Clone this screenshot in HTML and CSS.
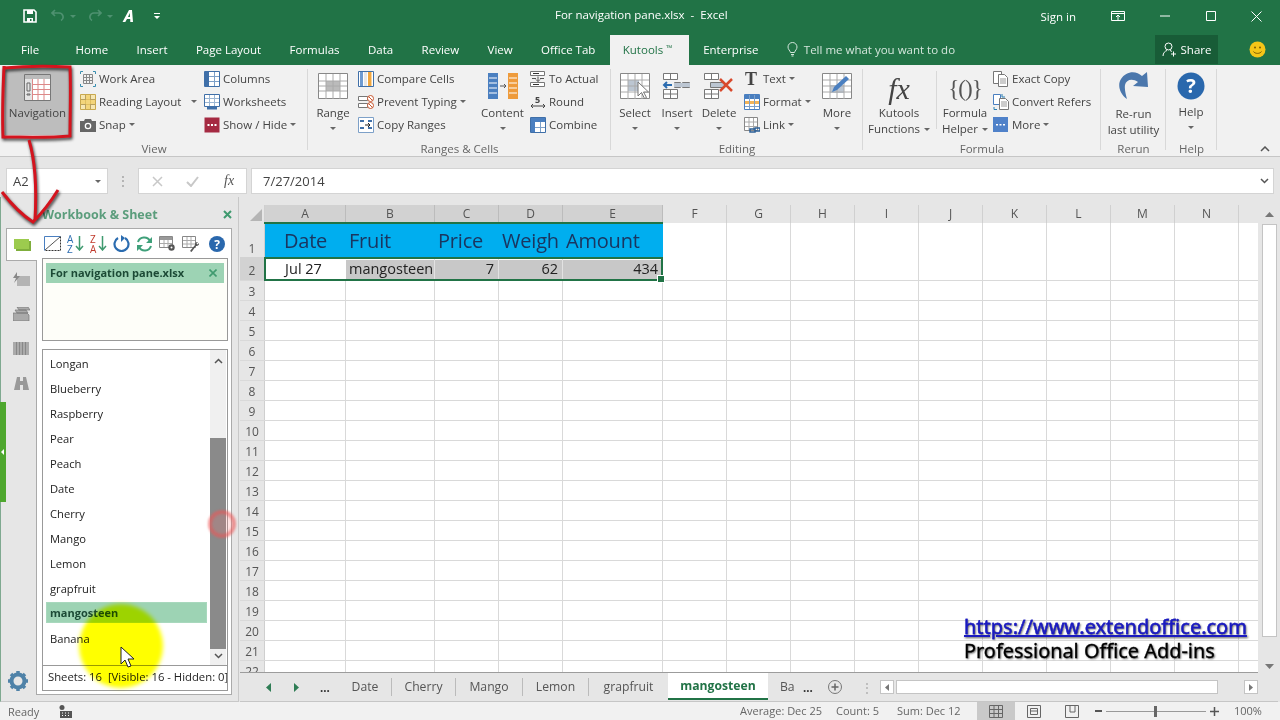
FILE: index.html
```html
<!DOCTYPE html>
<html lang="en">
<head>
  <meta charset="UTF-8" />
  <title>For navigation pane.xlsx - Excel</title>
  <link rel="stylesheet" href="styles.css">
</head>
<body>

  <!-- title bar -->
  <div class="titlebar">
    <div class="qat">
      <svg class="qat-save" width="16" height="16" viewBox="0 0 16 16"><path d="M2 2h10l2 2v10H2z" fill="none" stroke="#fff" stroke-width="1.6"/><path d="M5 2h6v4H5zM5 10h6v4H5z" fill="#fff"/><path d="M8 11h1.500v2H8z" fill="#217346"/></svg>
      <svg class="qat-undo" width="14" height="14" viewBox="0 0 14 14"><path d="M4 1 1 4l3 3M1.500 4H8a4 4 0 0 1 2 7.500" fill="none" stroke="#4e9170" stroke-width="1.700"/></svg>
      <span class="qat-drop dim"></span>
      <svg class="qat-redo" width="14" height="14" viewBox="0 0 14 14"><path d="m10 1 3 3-3 3M12.500 4H6a4 4 0 0 0-2 7.500" fill="none" stroke="#4e9170" stroke-width="1.700"/></svg>
      <span class="qat-drop dim"></span>
      <svg class="qat-a" width="13" height="14" viewBox="0 0 13 14"><path d="M7 1h3l1 12H8.300l-.1-3H5l-1.700 3H.5zM7.800 4 6 8h2z" fill="#fff"/></svg>
      <svg class="qat-more" width="8" height="8" viewBox="0 0 8 8"><path d="M1 1h6v1H1zM1 4h6L4 7z" fill="#fff"/></svg>
    </div>
    <div class="doc-title">For navigation pane.xlsx&nbsp; -&nbsp; Excel</div>
    <div class="win">
      <span class="signin">Sign in</span>
      <svg class="win-display" width="14" height="11" viewBox="0 0 14 11"><path d="M.5.500h13v9H.5zM.5 2.500h13M7 9V4M5 6l2-2 2 2" fill="none" stroke="#fff"/></svg>
      <svg class="win-min" width="10" height="10" viewBox="0 0 10 10"><path d="M0 5h10" stroke="#fff"/></svg>
      <svg class="win-max" width="10" height="10" viewBox="0 0 10 10"><path d="M.5.500h9v9h-9z" fill="none" stroke="#fff"/></svg>
      <svg class="win-close" width="11" height="11" viewBox="0 0 11 11"><path d="m.5.500 10 10M10.500.500l-10 10" stroke="#fff"/></svg>
    </div>
  </div>

  <!-- ribbon tabs -->
  <div class="tabs">
    <span class="tab tab-file">File</span>
    <span class="tab tab-home">Home</span>
    <span class="tab">Insert</span>
    <span class="tab">Page Layout</span>
    <span class="tab">Formulas</span>
    <span class="tab">Data</span>
    <span class="tab">Review</span>
    <span class="tab">View</span>
    <span class="tab">Office Tab</span>
    <span class="tab tab-active">Kutools <small>™</small></span>
    <span class="tab">Enterprise</span>
    <span class="tell">
      <svg width="11" height="15" viewBox="0 0 11 15"><path d="M3.500 10.500C3 8.500 1 7.500 1 5a4.500 4.500 0 0 1 9 0c0 2.500-2 3.500-2.500 5.500zM4 12.500h3M4.500 14h2" fill="none" stroke="#d4e6dc"/></svg>
      Tell me what you want to do
    </span>
    <span class="share">
      <svg width="15" height="15" viewBox="0 0 15 15"><circle cx="6.500" cy="4.500" r="3.500" fill="none" stroke="#fff"/><path d="M1 14c0-3 2-5 4-5.500M8 8.500c1 .3 1.500.7 2 1.200M11.500 9.500v5M9 12h5" fill="none" stroke="#fff"/></svg>
      Share
    </span>
    <svg class="smiley" width="17" height="17" viewBox="0 0 17 17"><circle cx="8.500" cy="8.500" r="8" fill="#f5c518"/><circle cx="6" cy="6.500" r="1" fill="#7a5a00"/><circle cx="11" cy="6.500" r="1" fill="#7a5a00"/><path d="M4.500 10.500c1.500 2.500 6.500 2.500 8 0" fill="none" stroke="#7a5a00"/></svg>
  </div>

  <!-- ribbon -->
  <div class="ribbon">

    <div class="group group-view">
      <div class="group-body">
        <div class="big big-nav">
          <svg width="27" height="27" viewBox="0 0 27 27"><path d="M.5.500h26v26H.5z" fill="#fff" stroke="#777"/><path d="M1 1h25v4H1z" fill="#bbb"/><path d="M1 5h7v21H1z" fill="#e4e4e4"/><path d="M8.500 5v21M14 5v21M20 5v21M8 10.500h18M8 15.500h18M8 20.500h18" stroke="#d88"/><path d="M3 9h3v8H3zM3 20h3v1H3z" fill="none" stroke="#666"/></svg>
          <span>Navigation</span>
        </div>
        <div class="col col-view1">
          <div class="item"><svg width="16" height="16" viewBox="0 0 16 16"><path d="M3.500 3.500h9v9h-9zM3.500 6.500h9M3.500 9.500h9M6.500 3.500v9M9.500 3.500v9" fill="none" stroke="#888"/><path d="M.5 3V.5H3M13 .5h2.500V3M.5 13v2.500H3M13 15.500h2.500V13" fill="none" stroke="#3a8fb0"/></svg>Work Area</div>
          <div class="item"><svg width="16" height="16" viewBox="0 0 16 16"><path d="M.5.500h15v15H.5z" fill="#f6e7b4" stroke="#c9a94f"/><path d="M5.500 1v14M10.500 1v14M1 5.500h14M1 10.500h14" stroke="#b8a060"/><path d="M6 1h4v14H6zM1 6h14v4H1z" fill="#f2cd62" opacity=".7"/></svg>Reading Layout<i class="caret caret-far"></i></div>
          <div class="item"><svg width="16" height="16" viewBox="0 0 16 16"><path d="M0 4h4l1-2h6l1 2h4v11H0z" fill="#666"/><circle cx="8" cy="9" r="3.300" fill="#fff"/><circle cx="8" cy="9" r="2" fill="#666"/></svg>Snap<i class="caret"></i></div>
        </div>
        <div class="col">
          <div class="item"><svg width="16" height="16" viewBox="0 0 16 16"><path d="M.5.500h15v15H.5z" fill="#fff" stroke="#3f6fa8"/><path d="M1 1h4v14H1z" fill="#3f6fa8"/><path d="M5 5.500h10M5 10.500h10M10.500 1v14" stroke="#7da0c8"/></svg>Columns</div>
          <div class="item"><svg width="16" height="16" viewBox="0 0 16 16"><path d="M.5.500h15v12H.5z" fill="#fff" stroke="#3f6fa8"/><path d="M1 4.500h14M1 8.500h14M5.500 1v11M10.500 1v11" stroke="#9bb6d3"/><path d="M3 13h10v2.500H3z" fill="#3f6fa8"/></svg>Worksheets</div>
          <div class="item"><svg width="16" height="16" viewBox="0 0 16 16"><path d="M.5.500h15v15H.5z" fill="#a52a42"/><path d="M3.500 7h2v2h-2zM7 7h2v2H7zM10.500 7h2v2h-2z" fill="#fff"/></svg>Show / Hide<i class="caret"></i></div>
        </div>
      </div>
      <div class="group-label">View</div>
    </div>

    <div class="group group-ranges">
      <div class="group-body">
        <div class="big big-range">
          <svg width="30" height="27" viewBox="0 0 30 27"><path d="M.5.500h29v25H.5z" fill="#fff" stroke="#888"/><path d="M8 8h14v10H8z" fill="#bbb"/><path d="M8 1v25M15 1v25M22 1v25M1 8h28M1 13h28M1 18h28" stroke="#aaa"/></svg>
          <span>Range</span><i class="caret caret-block"></i>
        </div>
        <div class="col col-compare">
          <div class="item"><svg width="16" height="16" viewBox="0 0 16 16"><path d="M.5.500h15v15H.5z" fill="#fff" stroke="#3f6fa8"/><path d="M2 1h3v14H2z" fill="#6f9bd1"/><path d="M6 1h3v14H6z" fill="#e8e8e8"/><path d="M10 1h3.500v14H10z" fill="#f0a63f"/></svg>Compare Cells</div>
          <div class="item"><svg width="16" height="16" viewBox="0 0 16 16"><path d="M.5 2.500h9v4h-9zM.5 9.500h9v4h-9z" fill="#fff" stroke="#777"/><circle cx="12.500" cy="4.500" r="3" fill="#fff" stroke="#c8562f"/><circle cx="12.500" cy="11.500" r="3" fill="#fff" stroke="#c8562f"/><path d="m10.500 2.500 4 4M10.500 9.500l4 4" stroke="#c8562f"/></svg>Prevent Typing<i class="caret"></i></div>
          <div class="item"><svg width="16" height="16" viewBox="0 0 16 16"><path d="M.5.500h15v15H.5z" fill="#fff" stroke="#7da0c8"/><path d="M2 3h4v2H2zM10 3h4v2h-4zM2 10h4v2H2zM10 10h4v2h-4z" fill="#3f6fa8"/><path d="M7 8h5M10 6l2 2-2 2" fill="none" stroke="#222"/></svg>Copy Ranges</div>
        </div>
        <div class="big big-content">
          <svg width="30" height="27" viewBox="0 0 30 27"><path d="M0 0h10v26H0z" fill="#4a7fc0"/><path d="M20 0h10v26H20z" fill="#ee9b3c"/><path d="M1 5h8M1 10h8M1 15h8M1 20h8M21 5h8M21 10h8M21 15h8M21 20h8" stroke="#fff"/><path d="M12 13h6M16 11l2 2-2 2" fill="none" stroke="#555"/></svg>
          <span>Content</span><i class="caret caret-block"></i>
        </div>
        <div class="col col-actual">
          <div class="item"><svg width="16" height="16" viewBox="0 0 16 16"><path d="M.5.500h14v4H.5zM.5 11.500h14v4H.5z" fill="#fff" stroke="#777"/><path d="M3 2.500h6M3 13.500h6" stroke="#333"/><path d="M8 5.500v5M6 8.500l2 2 2-2M2 7.500h4M10 7.500h4" fill="none" stroke="#555"/></svg>To Actual</div>
          <div class="item"><svg width="16" height="16" viewBox="0 0 16 16"><text x="5" y="9" class="svg-5">5</text><path d="M1 12h14M3 10l-2 2 2 2M13 10l2 2-2 2" fill="none" stroke="#444"/></svg>Round</div>
          <div class="item"><svg width="16" height="16" viewBox="0 0 16 16"><path d="M.5.500h15v15H.5z" fill="#fff" stroke="#3f6fa8"/><path d="M1 1h14v4H1zM1 1h4v14H1z" fill="#4a7fc0"/><path d="M5 10.500h10M10.500 5v10" stroke="#7da0c8"/></svg>Combine</div>
        </div>
      </div>
      <div class="group-label">Ranges &amp; Cells</div>
    </div>

    <div class="group group-editing">
      <div class="group-body">
        <div class="big big-edit">
          <svg width="30" height="27" viewBox="0 0 30 27"><path d="M.5.500h29v25H.5z" fill="#fff" stroke="#888"/><path d="M8 7h11v11H8z" fill="#bcc6d2"/><path d="M8 1v25M15 1v25M22 1v25M1 7h28M1 13h28M1 19h28" stroke="#aaa"/><path d="M18 9v14l3.500-3.500 3 6 2-1-3-5.500h5z" fill="#fff" stroke="#777"/></svg>
          <span>Select</span><i class="caret caret-block"></i>
        </div>
        <div class="big big-edit">
          <svg width="30" height="27" viewBox="0 0 30 27"><path d="M1.500.500h14v6h-14zM1.500 16.500h14v9h-14zM8.500 1v5M8.500 17v8M2 21h13M12.500 9.500h6v5h-6zM20.500 9.500h7v5h-7z" fill="#fff" stroke="#777"/><path d="M12 10h16v4H12z" fill="#bcc6d2"/><path d="M2 12h8M5 9l-3 3 3 3" fill="none" stroke="#2b6cb0" stroke-width="2"/></svg>
          <span>Insert</span><i class="caret caret-block"></i>
        </div>
        <div class="big big-edit">
          <svg width="30" height="27" viewBox="0 0 30 27"><path d="M.5.500h14v6H.5zM.5 16.500h14v9H.5zM7.500 1v5M7.500 17v8M1 21h13M6.500 9.500h14v5h-14z" fill="#fff" stroke="#777"/><path d="M7 10h13v4H7z" fill="#bcc6d2"/><path d="m16 6 12 12M28 6 16 18" stroke="#d8492c" stroke-width="2.500"/></svg>
          <span>Delete</span><i class="caret caret-block"></i>
        </div>
        <div class="col col-text">
          <div class="item"><svg width="16" height="16" viewBox="0 0 16 16"><text x="1" y="14" class="svg-t">T</text></svg>Text<i class="caret"></i></div>
          <div class="item"><svg width="16" height="16" viewBox="0 0 16 16"><path d="M.5.500h15v15H.5z" fill="#fff" stroke="#4a7fc0"/><path d="M1 1h14v4H1z" fill="#4a7fc0"/><path d="M1 7h14v3H1z" fill="#f2b45a"/><path d="M5.500 1v14M10.500 1v14M1 12.500h14" stroke="#7da0c8"/></svg>Format<i class="caret"></i></div>
          <div class="item"><svg width="16" height="16" viewBox="0 0 16 16"><path d="M.5.500h13v13H.5z" fill="#fff" stroke="#888"/><path d="M5 1v12M9.500 1v12M1 5h12M1 9.500h12" stroke="#aaa"/><path d="M6 12h5v3H6zM11 11h5v3h-5z" fill="none" stroke="#2b5f96" stroke-width="1.500"/></svg>Link<i class="caret"></i></div>
        </div>
        <div class="big big-edit">
          <svg width="30" height="27" viewBox="0 0 30 27"><path d="M.5.500h29v25H.5z" fill="#fff" stroke="#888"/><path d="M8 12h14v8H8z" fill="#bcc6d2"/><path d="M8 1v25M15 1v25M22 1v25M1 7h28M1 13h28M1 19h28" stroke="#aaa"/><path d="m10 19 2-5 12-11 3 3-12 11z" fill="#4a7fc0"/></svg>
          <span>More</span><i class="caret caret-block"></i>
        </div>
      </div>
      <div class="group-label">Editing</div>
    </div>

    <div class="group group-formula">
      <div class="group-body">
        <div class="big big-fx">
          <span class="fx-mark">fx</span>
          <span>Kutools</span>
          <span>Functions<i class="caret"></i></span>
        </div>
        <div class="sep"></div>
        <div class="big big-helper">
          <span class="brace-mark">{()}</span>
          <span>Formula</span>
          <span>Helper<i class="caret"></i></span>
        </div>
        <div class="col">
          <div class="item"><svg width="16" height="16" viewBox="0 0 16 16"><path d="M.5.500h8v12h-8z" fill="#fff" stroke="#777"/><path d="M5.500 3.500h6l3 3v9h-9z" fill="#fff" stroke="#777"/><path d="M7 8h6M7 10h6M7 12h6" stroke="#999"/></svg>Exact Copy</div>
          <div class="item"><svg width="16" height="16" viewBox="0 0 16 16"><path d="M.5.500h7v10h-7z" fill="#fff" stroke="#4a7fc0"/><path d="M6.500 4.500h6l3 3v8h-9z" fill="#fff" stroke="#777"/><path d="M8 8h6M8 10h6M8 12h6" stroke="#999"/><path d="M9 0v3h3M1 13v2.500h3" fill="none" stroke="#2b7fb0"/></svg>Convert Refers</div>
          <div class="item"><svg width="16" height="16" viewBox="0 0 16 16"><path d="M0 0h15v15H0z" fill="#4f81c9"/><path d="M3 7h2v1.500H3zM6.500 7h2v1.500h-2zM10 7h2v1.500h-2z" fill="#fff"/></svg>More<i class="caret"></i></div>
        </div>
      </div>
      <div class="group-label">Formula</div>
    </div>

    <div class="group group-rerun">
      <div class="group-body">
        <div class="big big-rerun">
          <svg width="32" height="30" viewBox="0 0 32 30"><path d="M9 29C2 24-1 15 3 9 8 1 18 0 24 6l5-4 1 15-15-1 5-4C14 8 8 10 7 15c-.7 5 1 10 2 14z" fill="#4b77ac"/></svg>
          <span>Re-run</span>
          <span>last utility</span>
        </div>
      </div>
      <div class="group-label">Rerun</div>
    </div>

    <div class="group group-help">
      <div class="group-body">
        <div class="big big-help">
          <svg width="28" height="28" viewBox="0 0 28 28"><circle cx="14" cy="14" r="13.500" fill="#2a68ad"/><text x="14" y="21" class="svg-q">?</text></svg>
          <span>Help</span><i class="caret caret-block"></i>
        </div>
      </div>
      <div class="group-label">Help</div>
    </div>

    <svg class="collapse" width="10" height="6" viewBox="0 0 10 6"><path d="m1 5 4-4 4 4" fill="none" stroke="#555" stroke-width="1.500"/></svg>
  </div>

  <!-- formula bar -->
  <div class="formula-bar">
    <div class="name-box">A2<i class="caret"></i></div>
    <div class="dots">⋮</div>
    <div class="fx-box">
      <svg width="11" height="11" viewBox="0 0 11 11"><path d="m1 1 9 9M10 1l-9 9" stroke="#c8c8c8" stroke-width="1.500"/></svg>
      <svg width="13" height="11" viewBox="0 0 13 11"><path d="m1 6 4 4 7-9" fill="none" stroke="#c8c8c8" stroke-width="2"/></svg>
      <span class="fx-small">fx</span>
    </div>
    <div class="formula-input">7/27/2014
      <svg width="9" height="6" viewBox="0 0 9 6"><path d="m1 1 3.500 3.500L8 1" fill="none" stroke="#555" stroke-width="1.500"/></svg>
    </div>
  </div>

  <div class="main">

    <!-- navigation pane -->
    <div class="pane">
      <div class="pane-title">Workbook &amp; Sheet
        <svg width="9" height="9" viewBox="0 0 9 9"><path d="m1 1 7 7M8 1 1 8" stroke="#3f9a6f" stroke-width="2"/></svg>
      </div>
      <div class="pane-body">
        <div class="side">
          <div class="side-tab side-on">
            <svg width="17" height="12" viewBox="0 0 17 12"><path d="M2 2h15v10H2z" fill="#7fae3c"/><path d="M0 0h15v10H0z" fill="#9ccb4e"/></svg>
          </div>
          <div class="side-tab">
            <svg width="17" height="14" viewBox="0 0 17 14"><path d="M4 4h13v10H4z" fill="#b4b4b4"/><path d="M4 0 0 6h3L1 11l6-7H4z" fill="#888"/></svg>
          </div>
          <div class="side-tab">
            <svg width="17" height="14" viewBox="0 0 17 14"><path d="M4 0h11l2 3H6zM2 3h11l2 3H4zM0 6h14l2 2v6H0z" fill="#aaa" stroke="#777" stroke-width=".7"/></svg>
          </div>
          <div class="side-tab">
            <svg width="16" height="13" viewBox="0 0 16 13"><path d="M0 0h16v13H0z" fill="#aaa"/><path d="M3.500 0v13M6.500 0v13M9.500 0v13M12.500 0v13" stroke="#888"/></svg>
          </div>
          <div class="side-tab">
            <svg width="15" height="13" viewBox="0 0 15 13"><path d="M3 0h3v4h3V0h3l3 13H9V8H6v5H0z" fill="#999"/></svg>
          </div>
          <svg class="gear" width="22" height="22" viewBox="0 0 22 22"><circle cx="11" cy="11" r="6.500" fill="none" stroke="#4f82a8" stroke-width="4"/><path d="M11 1v4M11 17v4M1 11h4M17 11h4M4 4l3 3M15 15l3 3M18 4l-3 3M7 15l-3 3" stroke="#4f82a8" stroke-width="3.500"/></svg>
        </div>
        <div class="pane-content">
          <div class="tools">
            <svg width="17" height="15" viewBox="0 0 17 15"><path d="M.5 14.500V.5h16" fill="none" stroke="#4a7fc0"/><path d="M16.500.5v14H.5" fill="none" stroke="#333" stroke-dasharray="2 1"/><path d="m1 14 15-13" stroke="#555"/></svg>
            <span class="sort"><b class="sort-a">A<br>Z</b><svg width="9" height="15" viewBox="0 0 9 15"><path d="M4.500 0v14M1 10l3.500 4L8 10" fill="none" stroke="#3f9a6f" stroke-width="1.500"/></svg></span>
            <span class="sort"><b class="sort-z">Z<br>A</b><svg width="9" height="15" viewBox="0 0 9 15"><path d="M4.500 0v14M1 10l3.500 4L8 10" fill="none" stroke="#3f9a6f" stroke-width="1.500"/></svg></span>
            <svg width="17" height="17" viewBox="0 0 17 17"><path d="M5 3A7 7 0 1 0 12 3" fill="none" stroke="#2b6cb0" stroke-width="2.200"/><path d="M8 0v7l4-4z" fill="#2b6cb0"/></svg>
            <svg width="17" height="16" viewBox="0 0 17 16"><path d="M2 6a6.500 6.500 0 0 1 12-1M15 10a6.500 6.500 0 0 1-12 1" fill="none" stroke="#3fa07a" stroke-width="2"/><path d="M16 1v6h-6zM1 15V9h6z" fill="#3fa07a"/></svg>
            <svg width="17" height="16" viewBox="0 0 17 16"><path d="M.5.500h13v11H.5z" fill="#fff" stroke="#888"/><path d="M1 1h12v3H1z" fill="#999"/><path d="M5 4v7M9 4v7M1 7.500h12" stroke="#aaa"/><circle cx="12.500" cy="11.500" r="3.200" fill="#555"/><circle cx="12.500" cy="11.500" r="1" fill="#fff"/></svg>
            <svg width="17" height="16" viewBox="0 0 17 16"><path d="M.5.500h13v11H.5z" fill="#fff" stroke="#888"/><path d="M5 1v10M9 1v10M1 4.500h12M1 8h12" stroke="#aaa"/><path d="m8 15 5-6a2.500 2.500 0 0 1 3-3l-1.500 1.500 1 1L17 7a2.500 2.500 0 0 1-3 3l-4.500 6z" fill="#555"/></svg>
            <svg class="tool-help" width="16" height="16" viewBox="0 0 16 16"><circle cx="8" cy="8" r="8" fill="#2a68ad"/><text x="8" y="12.500" class="svg-q2">?</text></svg>
          </div>
          <div class="books">
            <div class="book">For navigation pane.xlsx
              <svg width="8" height="8" viewBox="0 0 8 8"><path d="m.5.500 7 7M7.500.500l-7 7" stroke="#3f9a6f" stroke-width="1.600"/></svg>
            </div>
          </div>
          <div class="sheets">
            <div class="sheet-list">
              <div class="items">
                <div class="sheet-item">Longan</div>
                <div class="sheet-item">Blueberry</div>
                <div class="sheet-item">Raspberry</div>
                <div class="sheet-item">Pear</div>
                <div class="sheet-item">Peach</div>
                <div class="sheet-item">Date</div>
                <div class="sheet-item">Cherry</div>
                <div class="sheet-item">Mango</div>
                <div class="sheet-item">Lemon</div>
                <div class="sheet-item">grapfruit</div>
                <div class="sheet-item sheet-on">mangosteen</div>
                <div class="sheet-item">Banana</div>
              </div>
              <div class="list-scroll">
                <svg width="9" height="6" viewBox="0 0 9 6"><path d="m1 5 3.500-3.500L8 5" fill="none" stroke="#555" stroke-width="1.500"/></svg>
                <div class="list-thumb"></div>
                <svg width="9" height="6" viewBox="0 0 9 6"><path d="m1 1 3.500 3.500L8 1" fill="none" stroke="#555" stroke-width="1.500"/></svg>
              </div>
            </div>
            <div class="sheet-foot">Sheets: 16&nbsp; [Visible: 16 - Hidden: 0]</div>
          </div>
        </div>
      </div>
    </div>
    <div class="pane-strip"></div>

    <!-- worksheet -->
    <div class="work">
      <div class="work-top">
        <div class="grid">
          <div class="row row-cols">
            <div class="corner"></div>
            <div class="ch ch-on w-a">A</div><div class="ch ch-on w-b">B</div><div class="ch ch-on w-c">C</div><div class="ch ch-on w-d">D</div><div class="ch ch-on w-e">E</div>
            <div class="ch">F</div><div class="ch">G</div><div class="ch">H</div><div class="ch">I</div><div class="ch">J</div><div class="ch">K</div><div class="ch">L</div><div class="ch">M</div><div class="ch">N</div>
          </div>
          <div class="body">
            <div class="row row-1">
              <div class="rh rh-1">1</div>
              <div class="head w-a center">Date</div><div class="head w-b">Fruit</div><div class="head w-c">Price</div><div class="head w-d">Weigh</div><div class="head w-e">Amount</div>
            </div>
            <div class="row row-2">
              <div class="rh rh-on">2</div>
              <div class="cell w-a center">Jul 27</div><div class="cell cell-sel w-b">mangosteen</div><div class="cell cell-sel w-c right">7</div><div class="cell cell-sel w-d right">62</div><div class="cell cell-sel w-e right">434</div>
            </div>
            <div class="row"><div class="rh">3</div></div>
            <div class="row"><div class="rh">4</div></div>
            <div class="row"><div class="rh">5</div></div>
            <div class="row"><div class="rh">6</div></div>
            <div class="row"><div class="rh">7</div></div>
            <div class="row"><div class="rh">8</div></div>
            <div class="row"><div class="rh">9</div></div>
            <div class="row"><div class="rh">10</div></div>
            <div class="row"><div class="rh">11</div></div>
            <div class="row"><div class="rh">12</div></div>
            <div class="row"><div class="rh">13</div></div>
            <div class="row"><div class="rh">14</div></div>
            <div class="row"><div class="rh">15</div></div>
            <div class="row"><div class="rh">16</div></div>
            <div class="row"><div class="rh">17</div></div>
            <div class="row"><div class="rh">18</div></div>
            <div class="row"><div class="rh">19</div></div>
            <div class="row"><div class="rh">20</div></div>
            <div class="row"><div class="rh">21</div></div>
            <div class="row row-last"><div class="rh">22</div></div>
            <div class="selection"></div>
            <div class="brand">
              <a class="brand-link">https://www.extendoffice.com</a>
              <div class="brand-line">Professional Office Add-ins</div>
            </div>
          </div>
        </div>
        <div class="vscroll">
          <svg width="9" height="5" viewBox="0 0 9 5"><path d="M0 5h9L4.500 0z" fill="#777"/></svg>
          <div class="vthumb"></div>
          <svg width="9" height="5" viewBox="0 0 9 5"><path d="M0 0h9L4.500 5z" fill="#777"/></svg>
        </div>
      </div>
      <div class="sheetbar">
        <svg class="nav-l" width="5" height="9" viewBox="0 0 5 9"><path d="M5 0v9L0 4.500z" fill="#2f7d55"/></svg>
        <svg class="nav-r" width="5" height="9" viewBox="0 0 5 9"><path d="M0 0v9l5-4.500z" fill="#2f7d55"/></svg>
        <span class="nav-dots">...</span>
        <span class="stab t-date">Date</span>
        <span class="stab t-cherry">Cherry</span>
        <span class="stab t-mango">Mango</span>
        <span class="stab t-lemon">Lemon</span>
        <span class="stab t-grap">grapfruit</span>
        <span class="stab stab-on">mangosteen</span>
        <span class="stab t-ba">Ba</span>
        <span class="nav-dots2">...</span>
        <svg class="add" width="14" height="14" viewBox="0 0 14 14"><circle cx="7" cy="7" r="6.500" fill="none" stroke="#777"/><path d="M7 3.500v7M3.500 7h7" stroke="#666" stroke-width="1.500"/></svg>
        <span class="split">⋮</span>
        <div class="hscroll">
          <span class="hbtn"><svg width="4" height="7" viewBox="0 0 4 7"><path d="M4 0v7L0 3.500z" fill="#777"/></svg></span>
          <div class="hthumb"></div>
          <span class="hbtn"><svg width="4" height="7" viewBox="0 0 4 7"><path d="M0 0v7l4-3.500z" fill="#777"/></svg></span>
        </div>
      </div>
    </div>
  </div>

  <!-- status bar -->
  <div class="status">
    <span class="ready">Ready</span>
    <svg class="macro" width="13" height="13" viewBox="0 0 13 13"><circle cx="3" cy="2.500" r="2.500" fill="#555"/><path d="M1 6h12v7H1z" fill="#555"/><path d="M3 8h1M6 8h1M9 8h1M3 10.500h1M6 10.500h1M9 10.500h1" stroke="#fff"/></svg>
    <span class="stat s-avg">Average: Dec 25</span>
    <span class="stat s-count">Count: 5</span>
    <span class="stat s-sum">Sum: Dec 12</span>
    <span class="view view-on"><svg width="14" height="13" viewBox="0 0 14 13"><path d="M.5.500h13v12H.5zM5 1v11M9.500 1v11M1 4.500h12M1 8.500h12" fill="none" stroke="#666"/></svg></span>
    <span class="view"><svg width="14" height="13" viewBox="0 0 14 13"><path d="M.5.500h13v12H.5z" fill="none" stroke="#666"/><path d="M3.500 3.500h7v6h-7zM3.500 6h7" fill="none" stroke="#666"/></svg></span>
    <span class="view"><svg width="14" height="13" viewBox="0 0 14 13"><path d="M.5.500h13v12H.5zM5 1v6h5V1" fill="none" stroke="#666"/></svg></span>
    <div class="zoom">
      <span class="zoom-minus"></span>
      <div class="slider"><i></i></div>
      <svg width="9" height="9" viewBox="0 0 9 9"><path d="M4.500 0v9M0 4.500h9" stroke="#555" stroke-width="1.500"/></svg>
    </div>
    <span class="pct">100%</span>
  </div>

  <!-- screen recording marks -->
  <div class="spot"></div>
  <div class="click"></div>
  <svg class="marks" width="1280" height="720" viewBox="0 0 1280 720">
    <g class="mark-ink">
      <path d="M4 68C25 66 50 66 70 67 71 90 70 115 70 136 48 138 25 137 3 137 2 110 3 88 4 66"/>
      <path d="M29 140C35 160 37 185 35 220"/>
      <path d="M2 192C12 205 22 215 33 222 42 213 50 203 58 190"/>
    </g>
    <path d="M121 647v17l4-4 3 7 3-1-3-7h6z" fill="#fff" stroke="#222"/>
  </svg>

</body>
</html>
```

FILE: styles.css
```css
* {
  box-sizing: border-box;
}

body {
  margin: 0;
  width: 1280px;
  height: 720px;
  overflow: hidden;
  position: relative;
  background: #e6e6e6;
  color: #444;
  font-family: "Open Sans", "Noto Sans", sans-serif;
  font-size: 11.5px;
  display: flex;
  flex-direction: column;
}

svg {
  flex: none;
  display: block;
}

/* title bar */
.titlebar {
  height: 35px;
  padding-bottom: 3px;
  background: #217346;
  color: #fff;
  display: flex;
  align-items: center;
  position: relative;
}

.qat {
  display: flex;
  align-items: center;
  padding-left: 22px;
}

.qat-undo { margin-left: 13px; }
.qat-redo { margin-left: 12px; }
.qat-a { margin-left: 9px; }
.qat-more { margin-left: 18px; }

.qat-drop {
  width: 0;
  height: 0;
  margin-left: 5px;
  border: 3px solid transparent;
  border-top-color: #4e9170;
  border-bottom: 0;
}

.doc-title {
  position: absolute;
  left: 555px;
  top: 7px;
  white-space: nowrap;
}

.win {
  margin-left: auto;
  display: flex;
  align-items: center;
}

.signin { margin-right: 35px; }
.win-display { margin-right: 35px; }
.win-min { margin-right: 36px; }
.win-max { margin-right: 35px; }
.win-close { margin-right: 18px; }

/* tabs */
.tabs {
  height: 30px;
  background: #217346;
  color: #fff;
  display: flex;
  align-items: center;
  gap: 28.4px;
  padding: 0 0 2px 21px;
}

.tab {
  white-space: nowrap;
}

.tab-home { margin-left: 8px; }

.tab small {
  font-size: 8px;
  vertical-align: 3px;
}

.tab-active {
  background: #f1f1f1;
  color: #217346;
  align-self: stretch;
  width: 79px;
  margin: 0 -14px -2px -14px;
  padding: 7px 0 0 13px;
}

.tell {
  display: flex;
  align-items: center;
  gap: 6px;
  color: #d4e6dc;
  margin-left: 0;
}

.share {
  position: absolute;
  left: 1155px;
  top: 35px;
  width: 63px;
  height: 29px;
  background: #185c37;
  display: flex;
  align-items: center;
  justify-content: center;
  gap: 4px;
}

.smiley {
  position: absolute;
  left: 1249px;
  top: 41px;
}

/* ribbon */
.ribbon {
  height: 92px;
  background: #f1f1f1;
  display: flex;
  position: relative;
  border-bottom: 1px solid #c6c6c6;
}

.group {
  display: flex;
  flex-direction: column;
  position: relative;
  height: 91px;
}

.group::after {
  content: "";
  position: absolute;
  right: 0;
  top: 4px;
  bottom: 6px;
  width: 1px;
  background: #d8d8d8;
}

.group-body {
  height: 77px;
  display: flex;
}

.group-label {
  text-align: center;
  font-size: 11.5px;
  color: #666;
  line-height: 14px;
}

.group-view { width: 308px; }
.group-ranges { width: 303px; }
.group-editing { width: 252px; }
.group-formula { width: 238px; }
.group-rerun { width: 65px; }
.group-help { width: 51px; }

.big {
  display: flex;
  flex-direction: column;
  align-items: center;
  line-height: 16px;
  padding-top: 8px;
  white-space: nowrap;
  flex: none;
}

.big > svg {
  margin-bottom: 5px;
}

.big-nav {
  width: 65px;
  height: 67px;
  margin: 3px 0 0 5px;
  padding-top: 6px;
  background: #bdbdbd;
}

.big-nav > svg { margin-bottom: 4px; }

.big-range { width: 50px; }
.big-content { width: 55px; }
.big-edit { width: 42px; }
.group-editing .group-body { padding-left: 3px; }
.big-fx { width: 66px; margin-left: 3px; }
.big-helper { width: 56px; }
.big-rerun { width: 65px; }
.big-help { width: 50px; }

.big-rerun > svg { margin: -3px 0 6px; }
.big-help > svg { margin: -1px 0 4px; }

.fx-mark {
  font-family: "Liberation Serif", serif;
  font-style: italic;
  font-size: 30px;
  line-height: 32px;
  color: #444;
}

.brace-mark {
  font-family: "Liberation Serif", serif;
  font-size: 23px;
  line-height: 32px;
  color: #555;
  letter-spacing: -1px;
}

.sep {
  width: 1px;
  height: 58px;
  margin: 6px 0 0 4px;
  background: #d8d8d8;
}

.col {
  display: flex;
  flex-direction: column;
  flex: none;
  padding-top: 2px;
}

.col-view1 { width: 124px; margin-left: 10px; }
.col-compare { width: 117px; }
.col-actual { width: 80px; }
.col-text { width: 72px; margin-left: 4px; }

.item {
  height: 23px;
  display: flex;
  align-items: center;
  gap: 3px;
  white-space: nowrap;
}

.caret {
  display: inline-block;
  width: 0;
  height: 0;
  margin-left: 4px;
  border: 3px solid transparent;
  border-top-color: #666;
  border-bottom: 0;
  vertical-align: middle;
}

.item .caret { margin-left: 0; }
.item .caret-far { margin-left: 7px; }
.caret-block { margin: 6px 0 0; }

.svg-5 { font: bold 9px "Open Sans", sans-serif; fill: #444; }
.svg-t { font: bold 18px "Liberation Serif", serif; fill: #444; }
.svg-q { font: bold 20px "Open Sans", sans-serif; fill: #fff; text-anchor: middle; }
.svg-q2 { font: bold 12px "Open Sans", sans-serif; fill: #fff; text-anchor: middle; }

.collapse {
  position: absolute;
  left: 1260px;
  top: 81px;
}

/* formula bar */
.formula-bar {
  height: 40px;
  display: flex;
  align-items: flex-start;
  padding: 11px 6px 0;
  background: #e6e6e6;
}

.name-box, .fx-box, .formula-input {
  height: 26px;
  background: #fff;
  border: 1px solid #d4d4d4;
  display: flex;
  align-items: center;
}

.name-box {
  width: 102px;
  padding: 0 6px;
  font-size: 13px;
  justify-content: space-between;
}

.dots {
  width: 30px;
  text-align: center;
  line-height: 26px;
  color: #999;
}

.fx-box {
  width: 109px;
  padding-left: 13px;
  gap: 23px;
}

.fx-small {
  font-family: "Liberation Serif", serif;
  font-style: italic;
  font-size: 14px;
  color: #555;
  margin-left: 2px;
}

.formula-input {
  width: 1023px;
  margin-left: 4px;
  padding: 0 4px 0 11px;
  font-size: 13px;
  justify-content: space-between;
}

/* main */
.main {
  height: 505px;
  display: flex;
  position: relative;
}

.pane {
  width: 239px;
  padding-left: 5px;
  display: flex;
  flex-direction: column;
  border-right: 1px solid #c8c8c8;
  border-bottom: 1px solid #c8c8c8;
  border-left: 1px solid #7fa990;
}

.pane-strip {
  position: absolute;
  left: 0;
  top: 205px;
  width: 6px;
  height: 100px;
  background: #4ea72e;
}

.pane-strip::after {
  content: "";
  position: absolute;
  left: 1px;
  top: 47px;
  border: 3px solid transparent;
  border-right-color: #fff;
  border-left: 0;
}

.pane-title {
  height: 31px;
  display: flex;
  align-items: center;
  justify-content: space-between;
  padding: 4px 4px 0 36px;
  font-weight: 700;
  font-size: 12.5px;
  color: #5b9d7c;
  margin-right: 2px;
}

.pane-body {
  height: 467px;
  width: 226px;
  display: flex;
}

.side {
  width: 30px;
  display: flex;
  flex-direction: column;
  position: relative;
}

.side-tab {
  height: 35px;
  display: flex;
  align-items: center;
  justify-content: center;
}

.side-on {
  width: 31px;
  height: 33px;
  background: #fff;
  border: 1px solid #aaa;
  border-width: 1px 0 1px 1px;
  position: relative;
  z-index: 1;
}

.gear {
  margin: auto 0 3px 1px;
}

.pane-content {
  width: 196px;
  background: #fff;
  border: 1px solid #aaa;
  padding: 0 3px 0 5px;
  display: flex;
  flex-direction: column;
}

.tools {
  height: 29px;
  display: flex;
  align-items: center;
  gap: 6px;
  padding-left: 2px;
}

.sort {
  display: flex;
  align-items: center;
  justify-content: space-between;
  width: 17px;
}

.sort b {
  font-size: 10px;
  line-height: 10px;
  font-weight: 400;
}

.sort-a { color: #2b6cb0; }
.sort-z { color: #c0392b; }
.tool-help { margin-left: 4px; }

.books {
  height: 83px;
  background: #fefef9;
  border: 1px solid #999;
  padding: 4px 3px;
}

.book {
  height: 20px;
  background: #9dd3b4;
  padding: 0 7px 1px 4px;
  display: flex;
  align-items: center;
  justify-content: space-between;
  font-weight: 700;
  font-size: 11px;
  color: #1c4a36;
}

.sheets {
  height: 342px;
  margin-top: 8px;
  background: #fff;
  border: 1px solid #999;
  display: flex;
  flex-direction: column;
  color: #222;
}

.sheet-list {
  height: 316px;
  display: flex;
  border-bottom: 1px solid #999;
}

.items {
  flex: 1;
  padding: 1px 3px 0;
}

.sheet-item {
  height: 25px;
  line-height: 25px;
  padding-left: 4px;
  font-size: 11.2px;
}

.sheet-on {
  height: 21px;
  line-height: 19px;
  margin: 1px 0 3px;
  background: #9dd3b4;
  border: 1px solid #a8d8bd;
  padding-left: 3px;
  font-weight: 700;
  font-size: 11px;
  color: #1c4a36;
}

.list-scroll {
  width: 16px;
  margin-right: 1px;
  background: #f0f0f0;
  display: flex;
  flex-direction: column;
  align-items: center;
  padding-top: 8px;
}

.list-thumb {
  width: 16px;
  height: 211px;
  margin-top: 74px;
  background: #8a8a8a;
}

.list-scroll svg:last-child {
  margin-top: 4px;
}

.sheet-foot {
  height: 24px;
  line-height: 22px;
  padding-left: 5px;
  font-size: 11.3px;
  white-space: nowrap;
  overflow: hidden;
}

/* worksheet */
.work {
  width: 1041px;
  padding: 8px 2px 0 1px;
  display: flex;
  flex-direction: column;
}

.work-top {
  height: 468px;
  display: flex;
}

.grid {
  width: 1018px;
  background: #fff;
  overflow: hidden;
  display: flex;
  flex-direction: column;
  border-bottom: 1px solid #9c9c9c;
}

.row {
  display: flex;
  height: 20px;
  flex: none;
  border-bottom: 1px solid #d9d9d9;
}

.row-cols {
  height: 18px;
  background: #e6e6e6;
  border-bottom: 0;
}

.corner {
  width: 25px;
  position: relative;
  border-right: 1px solid #cfcfcf;
  overflow: hidden;
}

.corner::after {
  content: "";
  position: absolute;
  right: 2px;
  bottom: 2px;
  border: 6px solid transparent;
  border-right-color: #b5b5b5;
  border-bottom-color: #b5b5b5;
}

.ch {
  width: 64px;
  flex: none;
  text-align: center;
  font-size: 12px;
  line-height: 18px;
  color: #555;
  border-right: 1px solid #d0d0d0;
}

.ch-on {
  background: #d2d2d2;
  border-right-color: #bcbcbc;
}

.w-a { width: 81px; }
.w-b { width: 89px; }
.w-c { width: 64px; }
.w-d { width: 64px; }
.w-e { width: 100px; }

.body {
  position: relative;
  flex: 1;
  background-image:
    linear-gradient(#d9d9d9, #d9d9d9),
    linear-gradient(#d9d9d9, #d9d9d9),
    linear-gradient(#d9d9d9, #d9d9d9),
    linear-gradient(#d9d9d9, #d9d9d9),
    linear-gradient(#d9d9d9, #d9d9d9),
    repeating-linear-gradient(90deg, transparent 0 63px, #d9d9d9 63px 64px);
  background-size: 1px 100%, 1px 100%, 1px 100%, 1px 100%, 1px 100%, 100% 100%;
  background-position: 105px 0, 194px 0, 258px 0, 322px 0, 422px 0, 423px 0;
  background-repeat: no-repeat;
}

.rh {
  width: 25px;
  flex: none;
  height: 100%;
  background: #e6e6e6;
  border-right: 1px solid #cfcfcf;
  font-size: 12px;
  color: #555;
  line-height: 20px;
  padding-top: 3px;
  display: flex;
  align-items: center;
  justify-content: center;
}

.row-1 { height: 34px; border-bottom: 0; }
.row-2 { height: 24px; }

.rh-1 { padding-top: 17px; }
.rh-on { background: #d2d2d2; padding-top: 4px; }

.head {
  flex: none;
  background: #00aeef;
  color: #1a3660;
  font-size: 20px;
  line-height: 35px;
  padding-left: 3px;
  white-space: nowrap;
  letter-spacing: -.2px;
}

.cell {
  flex: none;
  font-size: 14.5px;
  line-height: 24px;
  color: #222;
  padding: 0 4px 0 3px;
  white-space: nowrap;
  overflow: hidden;
  background: #fff;
}

.cell-sel {
  background: linear-gradient(#fff 3px, #c8c8c8 3px 22px, #fff 22px);
  border-right: 1px solid #e2e2e2;
}

.center { text-align: center; padding-left: 0; }
.right { text-align: right; }

.selection {
  position: absolute;
  left: 24px;
  top: 34px;
  width: 399px;
  height: 24px;
  border: 2px solid #217346;
  pointer-events: none;
}

.selection::before {
  content: "";
  position: absolute;
  left: -2px;
  top: -37px;
  width: 399px;
  height: 2px;
  background: #217346;
}

.selection::after {
  content: "";
  position: absolute;
  right: -4px;
  bottom: -4px;
  width: 6px;
  height: 6px;
  background: #217346;
  border: 1px solid #fff;
}

.brand {
  position: absolute;
  left: 724px;
  top: 392px;
  font-family: "Noto Sans", sans-serif;
  font-size: 20px;
  line-height: 24px;
  white-space: nowrap;
  text-shadow: 1px 1px 2px #555;
  -webkit-text-stroke: .3px;
}

.brand-link {
  display: block;
  color: #1a1ac0;
  text-decoration: underline;
}

.brand-line {
  color: #000;
  font-size: 19.9px;
}

.vscroll {
  width: 18px;
  margin-left: 2px;
  background: #e6e6e6;
  display: flex;
  flex-direction: column;
  align-items: center;
  padding-top: 7px;
}

.vthumb {
  width: 15px;
  height: 413px;
  margin: 7px 0 27px;
  background: #fff;
  border: 1px solid #c4c4c4;
}

/* sheet tabs */
.sheetbar {
  height: 29px;
  display: flex;
  align-items: center;
  padding-left: 26px;
  position: relative;
  border-bottom: 1px solid #c6c6c6;
}

.nav-r { margin-left: 23px; }

.nav-dots {
  width: 40px;
  padding-left: 21px;
  color: #333;
  font-weight: 700;
}

.nav-dots2 {
  width: 15px;
  margin-left: 3px;
  color: #333;
  font-weight: 700;
}

.stab {
  height: 18px;
  line-height: 18px;
  text-align: center;
  color: #555;
  font-size: 12.2px;
  border-right: 1px solid #bbb;
  flex: none;
}

.t-date { width: 53px; }
.t-cherry { width: 64px; }
.t-mango { width: 67px; }
.t-lemon { width: 66px; }
.t-grap { width: 79px; border-right: 0; }
.t-ba { width: 32px; border-right: 0; text-align: left; padding-left: 12px; }

.stab-on {
  width: 100px;
  height: 27px;
  line-height: 26px;
  align-self: flex-start;
  background: #fff;
  color: #217346;
  font-weight: 700;
  border-right: 0;
  border-bottom: 2px solid #217346;
}

.add { margin-left: 10px; }

.split {
  margin-left: 19px;
  color: #aaa;
}

.hscroll {
  position: absolute;
  left: 640px;
  top: 7px;
  width: 378px;
  height: 14px;
  background: #e6e6e6;
  display: flex;
}

.hbtn {
  width: 14px;
  flex: none;
  background: #fff;
  border: 1px solid #c4c4c4;
  display: flex;
  align-items: center;
  justify-content: center;
}

.hthumb {
  width: 322px;
  margin: 0 auto 0 2px;
  background: #fff;
  border: 1px solid #c4c4c4;
}

/* status bar */
.status {
  height: 18px;
  background: #f1f1f1;
  display: flex;
  align-items: center;
  position: relative;
  font-size: 11px;
  color: #666;
}

.ready { margin-left: 8px; }
.macro { margin-left: 20px; }

.stat {
  position: absolute;
  top: 1px;
  white-space: nowrap;
}

.s-avg { left: 740px; }
.s-count { left: 836px; }
.s-sum { left: 897px; }

.view {
  position: absolute;
  top: 0;
  width: 38px;
  height: 18px;
  display: flex;
  align-items: center;
  justify-content: center;
}

.view-on { left: 977px; background: #c9c9c9; }
.view:nth-of-type(6) { left: 1015px; }
.view:nth-of-type(7) { left: 1053px; }

.zoom {
  position: absolute;
  left: 1095px;
  top: 0;
  height: 18px;
  display: flex;
  align-items: center;
}

.zoom-minus {
  width: 7px;
  height: 2px;
  background: #555;
}

.slider {
  width: 100px;
  height: 1px;
  margin: 0 4px;
  background: #999;
  position: relative;
}

.slider i {
  position: absolute;
  left: 48px;
  top: -5px;
  width: 3px;
  height: 11px;
  background: #666;
}

.pct {
  position: absolute;
  left: 1234px;
  top: 1px;
}

/* recording marks over the page */
.spot {
  position: absolute;
  left: 79px;
  top: 604px;
  width: 84px;
  height: 84px;
  border-radius: 50%;
  background: #ffff00;
  mix-blend-mode: multiply;
  filter: blur(2px);
}

.click {
  position: absolute;
  left: 208px;
  top: 510px;
  width: 28px;
  height: 28px;
  border-radius: 50%;
  background: rgba(255, 120, 120, .2);
  border: 4px solid rgba(235, 80, 80, .5);
  filter: blur(1px);
}

.marks {
  position: absolute;
  left: 0;
  top: 0;
  pointer-events: none;
}

.mark-ink {
  fill: none;
  stroke: #d4141e;
  stroke-width: 3;
  filter: drop-shadow(1px 2px 1.5px rgba(0, 0, 0, .75));
}
```
